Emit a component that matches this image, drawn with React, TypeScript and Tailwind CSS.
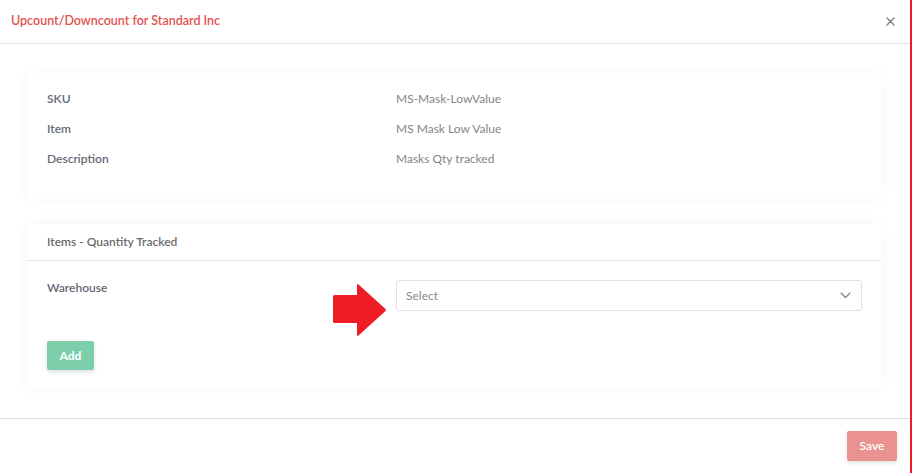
import React from "react";

export default function App() {
  const font = { fontFamily: 'Lato, "Noto Sans", "Liberation Sans", sans-serif' };
  return (
    <div style={font} className="w-[912px] h-[473px] bg-white border-r-2 border-[#ee1c25] flex flex-col overflow-hidden">
      <div className="h-[44px] shrink-0 border-b border-[#e3e3e3] flex items-center justify-between pl-[11px] pr-[15px]">
        <div className="text-[12.5px] font-semibold text-[#e4514f]">Upcount/Downcount for Standard Inc</div>
        <svg width="9" height="9" viewBox="0 0 9 9" className="mb-[1px]">
          <path d="M1 1L8 8M8 1L1 8" stroke="#7b7b7b" strokeWidth="1.4" strokeLinecap="round" />
        </svg>
      </div>

      <div className="flex-1 flex flex-col pl-[27px] pr-[29px] pt-[29px] gap-[25px]">
        <div className="h-[126px] bg-white shadow-[0_0_14px_rgba(0,0,0,0.045)] pl-[20px] pr-[19px] pt-[11px]">
          {[
            ["SKU", "MS-Mask-LowValue"],
            ["Item", "MS Mask Low Value"],
            ["Description", "Masks Qty tracked"],
          ].map(([l, v]) => (
            <div key={l} className="flex h-[30px] items-center text-[12px]">
              <div className="w-[349px] font-semibold text-[#646a75]">{l}</div>
              <div className="text-[#858585]">{v}</div>
            </div>
          ))}
        </div>

        <div className="h-[164px] bg-white shadow-[0_0_14px_rgba(0,0,0,0.045)] flex flex-col">
          <div className="h-[37px] shrink-0 border-b border-[#e2e6ec] flex items-center pl-[20px] text-[12px] font-semibold text-[#6b6b6b]">
            Items - Quantity Tracked
          </div>
          <div className="pl-[20px] pr-[19px] pt-[19px]">
            <div className="flex">
              <div className="w-[349px] pt-[1px] text-[12px] leading-[14px] font-semibold text-[#646a75]">Warehouse</div>
              <div className="relative flex-1 h-[31px] border border-[#dfe1e5] rounded-[3px] flex items-center justify-between pl-[9px] pr-[10px]">
                <span className="text-[12px] text-[#8a8a8a]">Select</span>
                <svg width="11" height="7" viewBox="0 0 11 7">
                  <path d="M1.2 1.2L5.5 5.5L9.8 1.2" fill="none" stroke="#8b94a1" strokeWidth="1.6" strokeLinecap="round" strokeLinejoin="round" />
                </svg>
                <svg className="absolute left-[-65px] top-[2px]" width="55" height="54" viewBox="0 0 55 54">
                  <path d="M1 13.5 Q1 12 2.5 12 L25 12 L25 2 Q25 0.5 26.5 1.5 L53.5 26 Q54.5 27 53.5 28 L26.5 52.5 Q25 53.5 25 52 L25 40 L2.5 40 Q1 40 1 38.5 Z" fill="#ee1c25" />
                </svg>
              </div>
            </div>
            <button className="mt-[30px] w-[47px] h-[29px] rounded-[2px] bg-[#7dcfac] text-white text-[12px] font-bold shadow-[0_2px_4px_rgba(0,0,0,0.12)]">
              Add
            </button>
          </div>
        </div>
      </div>

      <div className="h-[55px] shrink-0 border-t border-[#e0dfe6] flex items-center justify-end pr-[13px]">
        <button className="w-[50px] h-[30px] rounded-[2px] bg-[#e9928f] text-white text-[12px] font-semibold shadow-[0_2px_4px_rgba(0,0,0,0.12)]">
          Save
        </button>
      </div>
    </div>
  );
}
